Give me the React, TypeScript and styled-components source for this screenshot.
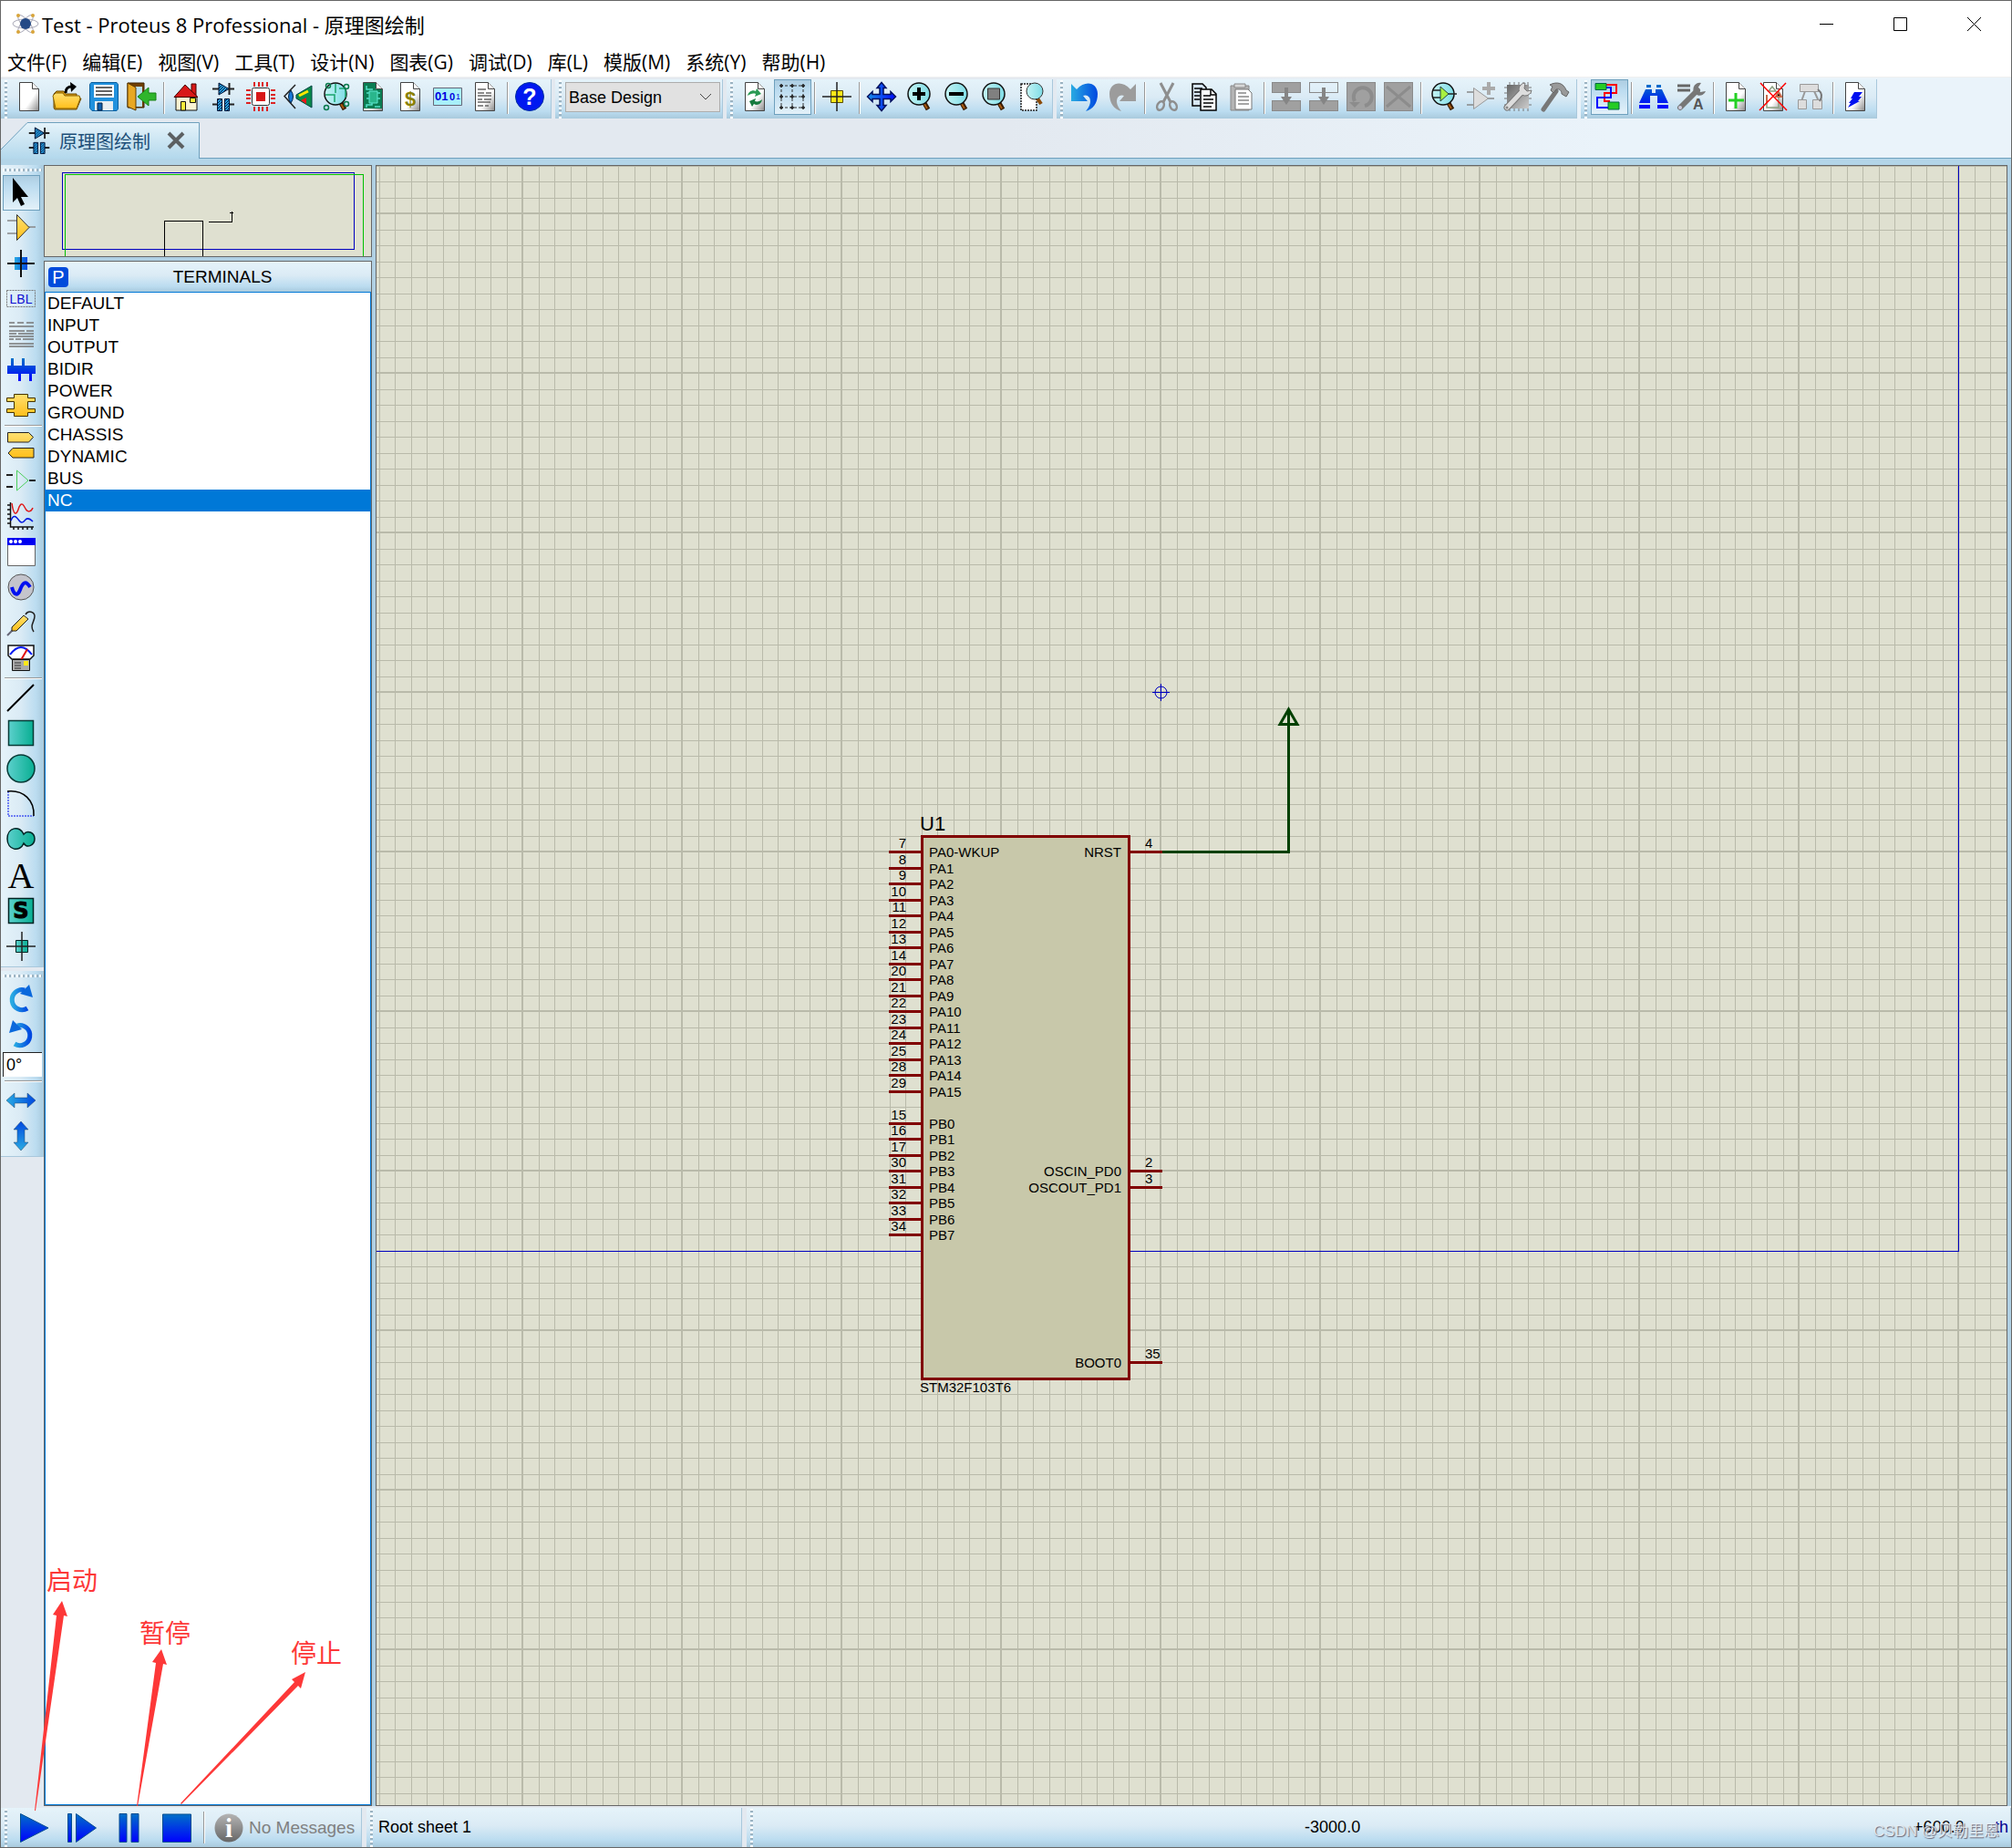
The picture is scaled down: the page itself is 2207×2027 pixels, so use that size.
import React, { ReactNode, useState } from "react";
import styled, { createGlobalStyle, css } from "styled-components";

const ui = `"Liberation Sans", "Noto Sans CJK SC", sans-serif`;
const system = `"Open Sans", "Noto Sans CJK SC", sans-serif`;
const barDown = "linear-gradient(180deg, #e5f3fa 0%, #dbebf5 45%, #bbdcf0 82%, #a9cadd 100%)";
const barRight = "linear-gradient(90deg, #e5f3fa 0%, #dbebf5 45%, #bbdcf0 82%, #a9cadd 100%)";

const GlobalStyle = createGlobalStyle`
  *, *::before, *::after { box-sizing: border-box; }
  html, body, #root { height: 100%; margin: 0; }
  body { overflow: hidden; background: #e3e9f0; font-family: ${ui}; font-size: 19px; color: #000; }
  button, input, select { font: inherit; color: inherit; margin: 0; padding: 0; border: 0; border-radius: 0; background: none; }
`;

const Window = styled.div`
  position: relative;
  display: flex;
  flex-direction: column;
  height: 100%;
  border: 1px solid #666;
  background: linear-gradient(90deg, #e3e9f0 0%, #e3e9f0 50%, #eaf3fa 80%);
`;

const TitleBar = styled.header`
  display: flex;
  align-items: center;
  height: 50px;
  padding-left: 11px;
  background: #fff;
  font: 22px ${system};
`;

const Title = styled.h1`
  flex: 1;
  margin: 0 0 0 2px;
  font: inherit;
`;

const WindowButton = styled.button`
  display: grid;
  place-items: center;
  width: 81px;
  height: 50px;
`;

const MenuBar = styled.nav`
  display: flex;
  gap: 17px;
  height: 33px;
  padding-left: 7px;
  background: #fff;
  font: 21px/34px ${system};
`;

const MenuItem = styled.button`
  white-space: nowrap;
`;

const ToolStrip = styled.div`
  display: flex;
  gap: 4px;
  height: 46px;
  padding-top: 2px;
  border-top: 1px solid #f0f0f0;
`;

const gripDown = css`
  width: 3px;
  background: repeating-linear-gradient(180deg, #fff 0 2px, #9cb3c2 2px 4px, transparent 4px 5px);
`;

const Toolbar = styled.div`
  display: flex;
  height: 43px;
  padding-right: 2px;
  background: ${barDown};
  border-right: 1px solid #a9c8dc;
  &::before {
    content: "";
    ${gripDown}
    margin: 1px 4px 0;
  }
`;

const ToolButton = styled.button<{ $on?: boolean }>`
  display: grid;
  place-items: center;
  flex: none;
  width: 41px;
  height: 39px;
  padding: 0 1px 1px 0;
  border: 1px solid ${(p) => (p.$on ? "#6ea0bd" : "transparent")};
  background: ${(p) => (p.$on ? "linear-gradient(180deg, #adcde1, #bcdcf0 30%, #e3f1f9)" : "none")};
  svg {
    overflow: visible;
  }
`;

const Divider = styled.span`
  width: 2px;
  height: 35px;
  margin: 3px;
  background: linear-gradient(90deg, #999 50%, #fff 50%);
`;

const SelectBox = styled.label`
  position: relative;
  width: 170px;
  height: 33px;
  margin-top: 3px;
  svg {
    position: absolute;
    right: 9px;
    top: 9px;
    pointer-events: none;
  }
`;

const Select = styled.select`
  appearance: none;
  width: 100%;
  height: 100%;
  padding-left: 3px;
  border: 1px solid #adadad;
  background: #e1e1e1;
  font-size: 18px;
`;

const TabStrip = styled.div`
  display: flex;
  height: 51px;
  padding-top: 4px;
  border-bottom: 7px solid #b3d5e8;
  background: linear-gradient(#6ea0bd, #6ea0bd) bottom / 100% 1px no-repeat;
`;

const Tab = styled.div`
  position: relative;
  display: flex;
  align-items: center;
  width: 218px;
  height: 40px;
  padding-left: 27px;
  font-size: 20px;
  color: #1d4f78;
`;

const TabShape = styled.svg`
  position: absolute;
  inset: 0;
`;

const TabLabel = styled.span`
  position: relative;
  width: 100px;
  margin-left: 5px;
  white-space: nowrap;
`;

const TabIcon = styled.span`
  position: relative;
  display: grid;
  width: 32px;
`;

const TabClose = styled.button`
  position: relative;
  display: grid;
  margin-left: 18px;
`;

const Workspace = styled.main`
  display: grid;
  grid-template-columns: 47px 360px minmax(0, 1fr);
  flex: 1;
  min-height: 0;
`;

const SideTools = styled.div`
  display: flex;
  flex-direction: column;
  gap: 4px;
`;

const SideBar = styled.div`
  display: flex;
  flex-direction: column;
  padding: 0 2px 2px;
  background: ${barRight};
  border-bottom: 1px solid #a9c8dc;
  &::before {
    content: "";
    height: 3px;
    margin: 4px 0;
    background: repeating-linear-gradient(90deg, #fff 0 2px, #9cb3c2 2px 4px, transparent 4px 5px);
  }
`;

const SideDivider = styled.span`
  height: 2px;
  margin: 1px 0 1px 2px;
  background: linear-gradient(180deg, #999 50%, #fff 50%);
`;

const Angle = styled.input`
  width: 43px;
  height: 27px;
  margin-bottom: 3px;
  padding-left: 3px;
  border-top: 1px solid #222;
  border-left: 1px solid #222;
  background: #fff;
  font-size: 18px;
`;

const Browser = styled.section`
  display: flex;
  flex-direction: column;
  gap: 4px;
  min-height: 0;
  background: #b0d0e3;
`;

const Overview = styled.div`
  height: 101px;
  border: 1px solid #666;
  background: #dfe0d0;
`;

const Terminals = styled.div`
  display: flex;
  flex-direction: column;
  flex: 1;
  border: 1px solid #666;
`;

const TerminalsHead = styled.div`
  display: flex;
  align-items: center;
  height: 33px;
  padding: 0 14px 0 4px;
  background: ${barDown};
`;

const PickButton = styled.button`
  width: 22px;
  height: 22px;
  border-radius: 4px;
  background: #004bdb;
  color: #fff;
  font-size: 20px;
  line-height: 22px;
`;

const TerminalsTitle = styled.h2`
  flex: 1;
  margin: 0;
  padding-left: 20px;
  text-align: center;
  font: inherit;
`;

const TerminalList = styled.ul`
  flex: 1;
  margin: 0;
  padding: 0;
  list-style: none;
  border: 1px solid #0078d7;
  background: #fff;
`;

const Terminal = styled.button<{ $on: boolean }>`
  display: block;
  width: 100%;
  height: 24px;
  padding-left: 2px;
  text-align: left;
  line-height: 24px;
  background: ${(p) => (p.$on ? "#0078d7" : "transparent")};
  color: ${(p) => (p.$on ? "#fff" : "#000")};
`;

const Sheet = styled.section`
  min-height: 0;
  padding: 0 4px;
  background: #b0d0e3;
`;

const SheetFrame = styled.div`
  height: 100%;
  border: 1px solid #666;
  background: #dfe0d0;
  svg {
    display: block;
  }
`;

const StatusBar = styled.footer`
  display: flex;
  gap: 5px;
  height: 45px;
  padding-top: 2px;
  font-size: 18px;
`;

const StatusPart = styled(Toolbar)<{ $width?: number }>`
  flex: ${(p) => (p.$width ? `0 0 ${p.$width}px` : "1")};
  align-items: center;
  &::before {
    align-self: stretch;
  }
`;

const PlayButton = styled.button`
  display: grid;
  place-items: center;
  width: 52px;
  height: 39px;
`;

const Message = styled.span`
  display: flex;
  align-items: center;
  gap: 6px;
  padding-left: 7px;
  font-size: 19px;
  color: #808080;
  white-space: nowrap;
`;

const SheetName = styled.span`
  padding-left: 2px;
`;

const Coordinates = styled.div`
  display: grid;
  grid-template-columns: 602fr 669fr 89fr 15fr;
  flex: 1;
  white-space: nowrap;
`;

const Unit = styled.span`
  color: #000090;
`;

const Watermark = styled.span`
  position: absolute;
  right: 13px;
  bottom: 4px;
  font: 17px/26px ${ui};
  color: rgba(235, 240, 244, 0.85);
  text-shadow: 1px 1px 1px #667;
`;

const Notes = styled.svg`
  position: absolute;
  left: -1px;
  bottom: -1px;
  pointer-events: none;
`;

const Shades = () => (
  <svg width="0" height="0" style={{ position: "absolute" }} aria-hidden="true">
    <defs>
      <linearGradient id="paper" x1="0" y1="0" x2="1" y2="1">
        <stop offset=".6" stopColor="#fff" />
        <stop offset="1" stopColor="#888" />
      </linearGradient>
      <linearGradient id="gold" x1="0" y1="0" x2="0" y2="1">
        <stop offset="0" stopColor="#ffe070" />
        <stop offset="1" stopColor="#ffbf1a" />
      </linearGradient>
      <linearGradient id="blue" x1="0" y1="0" x2="0" y2="1">
        <stop offset="0" stopColor="#0070c8" />
        <stop offset="1" stopColor="#0000ff" />
      </linearGradient>
      <linearGradient id="sky" x1="0" y1="0" x2="1" y2="0">
        <stop offset="0" stopColor="#29abe2" />
        <stop offset="1" stopColor="#0048e0" />
      </linearGradient>
      <linearGradient id="pan" x1="0" y1="0" x2="1" y2="0">
        <stop offset="0" stopColor="#1890e8" />
        <stop offset="1" stopColor="#0008ff" />
      </linearGradient>
      <linearGradient id="skyUp" x1="0" y1="1" x2="0" y2="0">
        <stop offset="0" stopColor="#29abe2" />
        <stop offset="1" stopColor="#0048e0" />
      </linearGradient>
      <linearGradient id="teal" x1="0" y1="0" x2="1" y2="0">
        <stop offset="0" stopColor="#5cd0cc" />
        <stop offset="1" stopColor="#08ae92" />
      </linearGradient>
      <linearGradient id="steel" x1="0" y1="0" x2="1" y2="1">
        <stop offset="0" stopColor="#666" />
        <stop offset="1" stopColor="#ccc" />
      </linearGradient>
      <linearGradient id="badge" x1="0" y1="0" x2="0" y2="1">
        <stop offset="0" stopColor="#b4b4b4" />
        <stop offset="1" stopColor="#666" />
      </linearGradient>
      <linearGradient id="lens" x1="0" y1="0" x2="1" y2="0">
        <stop offset="0" stopColor="#c4f4f4" />
        <stop offset="1" stopColor="#7fdce6" />
      </linearGradient>
      <linearGradient id="tab" x1="0" y1="0" x2="0" y2="1">
        <stop offset="0" stopColor="#e5f3fa" />
        <stop offset="1" stopColor="#b3d8ec" />
      </linearGradient>
      <pattern id="hatch" width="3" height="3" patternUnits="userSpaceOnUse">
        <rect width="3" height="3" fill="#29a0e8" />
        <path d="M0 3L3 0" stroke="#024" />
      </pattern>
    </defs>
  </svg>
);

const page = (
  <>
    <path d="M5.5 .5h14l7 7v24h-21z" fill="url(#paper)" stroke="#444" />
    <path d="M19.5 .5v7h7" fill="#fff" stroke="#444" />
  </>
);
const lens = (
  <>
    <path d="M22 23l4 7" stroke="#3a1c00" strokeWidth="5" />
    <path d="M22 24l3 5" stroke="#a85a10" strokeWidth="2" />
    <circle cx="16" cy="13" r="12" fill="url(#lens)" stroke="#111" strokeWidth="1.5" />
  </>
);
const greyBlock = (y: number, h: number, fill = "#a0a0a0") => (
  <rect x=".5" y={y + 0.5} width="31" height={h - 1} fill={fill} stroke="#8a8a8a" />
);

const art: Record<string, ReactNode> = {
  new: page,
  open: (
    <>
      <path d="M2 28V13l3-3h8l2 3h12v5h5l-5 12H3z" fill="#d99a10" stroke="#6b4a00" />
      <path d="M1 15l3-3h8l2 3h16l1 3-4 11H4z" fill="url(#gold)" stroke="#8a6200" />
      <path d="M15 12c0-5 2-7 7-7" fill="none" stroke="#000" strokeWidth="3" />
      <path d="M20 0l7 5-6 6z" />
    </>
  ),
  save: (
    <>
      <path d="M2 .5h28l1.5 2v27l-1.5 2H3l-2.5-3v-26z" fill="#2191dd" stroke="#0c5f9e" />
      <path d="M5 3h22v14H5z" fill="#fff" />
      <path d="M7 6h18M7 10h18M7 14h18" stroke="#333" strokeWidth="1.5" />
      <path d="M6 21h20v10H6z" fill="#e8eef2" />
      <path d="M9 23h5v8H9z" fill="#0e5fae" stroke="#024" />
    </>
  ),
  exit: (
    <>
      <path d="M1 1h18v27H1z" fill="#704000" stroke="#402400" />
      <path d="M8 5h9v22H8z" fill="#b9dff0" />
      <path d="M1 1l9 5v25l-9-4z" fill="#e8a823" stroke="#5b3900" />
      <path d="M32 12h-8V6L12 16l12 10v-6h8z" fill="#2fb52c" stroke="#178014" />
    </>
  ),
  home: (
    <>
      <path d="M22 2h5v14h-5z" fill="#d81818" stroke="#400" />
      <path d="M5 16h23v15H5z" fill="#fbf4d2" stroke="#111" />
      <path d="M15 3L3 16.5h26z" fill="#d81818" stroke="#400" />
      <path d="M10.5 21.5h5V31h-5zM20.5 17.5h6v5h-6z" fill="#ffef3a" stroke="#111" />
    </>
  ),
  schematic: (
    <>
      <path d="M4 7.5h24M4 24.5h24" stroke="#222" strokeWidth="2" />
      <path d="M11 1v13l11-6.500z" fill="url(#hatch)" stroke="#013" />
      <path d="M22.5 1v13" stroke="#222" strokeWidth="2" />
      <path d="M9.5 18.5h5v13h-5zM17.5 18.5h5v13h-5z" fill="url(#hatch)" stroke="#013" />
      <path d="M15 24.5h2" stroke="#d3e7f3" strokeWidth="3" />
    </>
  ),
  pcb: (
    <>
      <path d="M9 0v32M14 0v32M18 0v32M23 0v32M0 9h32M0 14h32M0 18h32M0 23h32" stroke="#d22" strokeWidth="2" />
      <rect x="5" y="5" width="22" height="22" fill="#d8ebf6" />
      <rect x="6.5" y="6.5" width="19" height="19" rx="2" fill="#fff" stroke="#333" />
      <path d="M11 11h10v10H11z" fill="#d81818" />
    </>
  ),
  viewer: (
    <>
      <path d="M13 3L1 15.5 13 29" fill="none" stroke="#222" strokeWidth="1.5" />
      <path d="M8 9q5 7 0 14-5-7 0-14z" fill="#1878d8" stroke="#024" />
      <path d="M31 4v24L14 18v-4z" fill="#0a8a4a" stroke="#044" />
      <path d="M17 15l10-5" stroke="#ffe800" strokeWidth="3" />
      <path d="M19 20l6-3v7z" fill="#f01818" />
    </>
  ),
  inspect: (
    <>
      {lens}
      <path d="M16 2v10M5 14h10v8M20 7h7v10" fill="none" stroke="#1aa46c" strokeWidth="1.5" />
      <g fill="none" stroke="#0a7a4c" strokeWidth="1.5">
        <circle cx="6" cy="28" r="2.5" />
        <circle cx="28" cy="5" r="2.5" />
        <circle cx="28" cy="24" r="2.5" />
        <circle cx="8" cy="4" r="2.5" />
      </g>
    </>
  ),
  pcbPage: (
    <>
      {page}
      <path d="M6 1h13v7h7v21H6z" fill="#0b7c52" />
      <path d="M12 10h9v13h-9z" fill="#2ab68c" stroke="#60e8d0" />
      <path d="M9 4v4h7M9 12h3M9 18h3M9 28v-3h6v-2M24 12h-3M24 18h-3M24 27h-6" fill="none" stroke="#54e0c8" strokeWidth="1.5" />
    </>
  ),
  cost: (
    <>
      {page}
      <text x="16" y="26" textAnchor="middle" fontSize="22" fontWeight="700" fill="#8a8000">$</text>
    </>
  ),
  binary: (
    <>
      <path d="M.5 6.5h31v19H.5z" fill="#a8f0fa" stroke="#667" />
      <text x="2" y="20" fontSize="13" fontWeight="700" fill="#0000e0">01</text>
      <text x="18" y="20" fontSize="11" fontWeight="700" fill="#0000e0">0</text>
      <text x="25" y="19" fontSize="9" fill="#0000e0">1</text>
    </>
  ),
  report: (
    <>
      {page}
      <path d="M8 8h9M8 12h7m2 0h6M8 15h15M8 19h5m2 0h8M8 22h14M8 26h6m2 0h4" stroke="#666" strokeWidth="1.5" />
    </>
  ),
  help: (
    <>
      <circle cx="16" cy="16" r="15.5" fill="#0018f0" stroke="#0030a0" />
      <text x="16" y="25" textAnchor="middle" fontSize="25" fontWeight="700" fill="#fff">?</text>
    </>
  ),
  refresh: (
    <>
      {page}
      <path d="M8 15c1-5 6-7 9-5l1-3 5 6-7 3 1-3c-3-1-6 0-9 2z" fill="#2a9a54" />
      <path d="M24 19c-1 6-6 7-9 5l-2 3-3-6 7-3-1 3c3 1 6 0 8-2z" fill="#167a3e" />
    </>
  ),
  grid: (
    <>
      <path d="M3 4h26M3 16h26M3 28h26M4 3v26M16 3v26M28 3v26" stroke="#333" strokeDasharray="3 2" />
      <path d="M2 4h4M14 4h4M26 4h4M2 16h4M14 16h4M26 16h4M2 28h4M14 28h4M26 28h4M4 2v4M16 2v4M28 2v4M4 14v4M16 14v4M28 14v4M4 26v4M16 26v4M28 26v4" stroke="#222" strokeWidth="1.5" />
    </>
  ),
  origin: (
    <>
      <path d="M9.5 9.5h13v13h-13z" fill="#ffe818" stroke="#554a00" />
      <path d="M16 0v32M0 16h32" stroke="#222" strokeWidth="1.5" />
    </>
  ),
  pan: (
    <path d="M16 .5l5 6h-3v7h8v-3l5.5 5.5-5.5 5.5v-3h-8v7h3l-5 6-5-6h3v-7H6v3L.5 16 6 10.5v3h8v-7h-3z" fill="url(#pan)" stroke="#001060" strokeWidth="1.5" />
  ),
  zoomIn: (
    <>
      {lens}
      <path d="M9 13h14M16 6v14" stroke="#000" strokeWidth="4" />
    </>
  ),
  zoomOut: (
    <>
      {lens}
      <path d="M8 13h16" stroke="#000" strokeWidth="4" />
    </>
  ),
  zoomAll: (
    <>
      {lens}
      <path d="M9.5 7h13v12h-13z" fill="#808080" stroke="#333" />
    </>
  ),
  zoomArea: (
    <>
      <path d="M5 2h17v29H5z" fill="#fff" stroke="#222" strokeWidth="1.5" strokeDasharray="2 1" />
      <path d="M23 18l4 6" stroke="#8a4a08" strokeWidth="4" />
      <circle cx="20" cy="10" r="9" fill="url(#lens)" stroke="#333" />
    </>
  ),
  undo: <path d="M1 2l6 6C17-3 30 1 30 13c0 10-5 17-13 19 5-6 6-11 4-15-2-3-5-3-7-2l5 6H1z" fill="url(#sky)" />,
  redo: <path d="M31 2l-6 6C15-3 2 1 2 13c0 10 5 17 13 19-5-6-6-11-4-15 2-3 5-3 7-2l-5 6h18z" fill="#9c9c9c" />,
  cut: (
    <g fill="none" stroke="#8e8e8e">
      <path d="M9 1l11 21M23 1L12 22" strokeWidth="3" />
      <ellipse cx="9" cy="26" rx="3.5" ry="5" strokeWidth="2.5" transform="rotate(25 9 26)" />
      <ellipse cx="23" cy="26" rx="3.5" ry="5" strokeWidth="2.5" transform="rotate(-25 23 26)" />
    </g>
  ),
  copy: (
    <>
      <path d="M3 2h11l4 4v20H3z" fill="#d8e8f4" stroke="#000" strokeWidth="1.5" />
      <path d="M5 7h9M5 11h9M5 15h6M5 19h6" stroke="#000" strokeWidth="1.5" />
      <path d="M12 8h12l5 5v18H12z" fill="#fff" stroke="#000" strokeWidth="1.5" />
      <path d="M23 8v6h6M15 15h8M15 19h11M15 23h11M15 27h9" fill="none" stroke="#000" strokeWidth="1.5" />
    </>
  ),
  paste: (
    <>
      <path d="M4 4h20v27H4z" fill="#b4b4b4" stroke="#888" />
      <path d="M8 2h12v4H8z" fill="#d8d8d8" stroke="#888" />
      <path d="M9 8h14l4 4v18H9z" fill="#fff" stroke="#777" />
      <path d="M12 12h9M12 16h12M12 20h12M12 24h12" stroke="#888" strokeWidth="1.5" />
    </>
  ),
  blockCopy: (
    <>
      {greyBlock(0, 12)}
      {greyBlock(20, 12)}
      <path d="M14 6h4v10h4l-6 9-6-9h4z" fill="#858585" />
    </>
  ),
  blockMove: (
    <>
      {greyBlock(0, 12, "none")}
      {greyBlock(20, 12)}
      <path d="M14 6h4v10h4l-6 9-6-9h4z" fill="#858585" />
    </>
  ),
  blockRotate: (
    <>
      {greyBlock(0, 32)}
      <path d="M9 21a10 10 0 1 1 11 5" fill="none" stroke="#8c8c8c" strokeWidth="4" />
      <path d="M3 22h12l-6 6z" fill="#8c8c8c" />
    </>
  ),
  blockDelete: (
    <>
      {greyBlock(0, 32)}
      <path d="M3 5l26 22M29 5L3 27" stroke="#8c8c8c" strokeWidth="3" />
    </>
  ),
  pick: (
    <>
      {lens}
      <path d="M5 9h8M5 17h8M21 13h10" stroke="#222" strokeWidth="1.5" />
      <path d="M13 5v16l9-8z" fill="#a8f040" stroke="#244" />
    </>
  ),
  make: (
    <>
      <path d="M1 11h8M1 25h8M23 18h8" stroke="#888" strokeWidth="1.5" />
      <path d="M8.5 6.5v23l16-11.5z" fill="#ddd" stroke="#999" />
      <path d="M25 0v14M18 7h14" stroke="#aaa" strokeWidth="4" />
    </>
  ),
  package: (
    <>
      <path d="M7 0v32M12 0v32M17 0v32M22 0v32M27 0v32M1 6h30M1 12h30M1 18h30M1 25h30" stroke="#777" />
      <path d="M4 3h24v26H4z" fill="url(#steel)" />
      <path d="M4 28L21 10" stroke="#777" strokeWidth="7" strokeLinecap="round" />
      <path d="M24 1a7 7 0 1 0 7 8l-5 1-3-3z" fill="#ddd" stroke="#777" />
      <path d="M4 28L21 10" stroke="#ddd" strokeWidth="5" strokeLinecap="round" />
      <circle cx="4" cy="28" r="1.5" fill="#888" />
    </>
  ),
  decompose: (
    <>
      <path d="M3 30L17 10" stroke="#777" strokeWidth="5" strokeLinecap="round" />
      <path d="M10 3c8-4 15-2 18 6l3 2-3 5-5-3c0-4-3-6-6-5l-3 4-3-3 2-4z" fill="#999" stroke="#666" />
    </>
  ),
  router: (
    <>
      <path d="M13 3h11v9H11v9h6" fill="none" stroke="#f00" strokeWidth="2" />
      <path d="M13 6h5v11H3v11h12" fill="none" stroke="#00f" strokeWidth="2" />
      <path d="M1 1.5h12v7H1zM15 22h12v8H15z" fill="#25cc25" stroke="#064" />
    </>
  ),
  search: (
    <>
      <path d="M8 3h5v3H8zM19 3h5v3h-5zM7 8h7v4h4V8h7l7 15H20v-8h-8v8H0zM0 25h12v4H0zM20 25h12v4H20z" fill="url(#blue)" />
    </>
  ),
  assign: (
    <>
      <path d="M1 4h14M1 9h14" stroke="#666" strokeWidth="3" />
      <path d="M4 28L23 9" stroke="#777" strokeWidth="6" strokeLinecap="round" />
      <path d="M27 1a7 7 0 1 0 5 9l-6 1-3-4z" fill="#777" />
      <circle cx="4" cy="28" r="2" fill="#ccd" />
      <text x="18" y="30" fontSize="16" fontWeight="700" fill="#555">A</text>
    </>
  ),
  addSheet: (
    <>
      {page}
      <path d="M16 12v17M8 20h17" stroke="#24d024" strokeWidth="3" />
    </>
  ),
  removeSheet: (
    <>
      {page}
      <path d="M9 14v14h13V14M15 5l-4 5h8z" fill="none" stroke="#8aa080" strokeWidth="1.5" />
      <path d="M9 14v9M22 11l3 5h-6z" stroke="#c86848" strokeWidth="2" />
      <path d="M2 1l29 30M30 1L1 31" stroke="#f00" strokeWidth="1.5" />
    </>
  ),
  parent: (
    <>
      <path d="M10 10L6 21M20 10l5 11" stroke="#999" strokeWidth="2" />
      <path d="M4.5 2.5h20v8h-20zM2.5 19.5h9v10h-9zM18.5 19.5h10v10h-10z" fill="#ddd" stroke="#999" />
      <path d="M26 21q5-7-2-13" fill="none" stroke="#777" strokeWidth="2" />
    </>
  ),
  electrical: (
    <>
      {page}
      <path d="M15 11h9l-4 5h3l-4 5h2L8 28l3-5h-2l4-5h-2z" fill="#0010f0" />
    </>
  ),
  arrow: <path d="M7 0v27l5-5 4 9 4-2-4-8h8z" />,
  component: (
    <>
      <path d="M1 8h10M1 22h10M24 15h8" stroke="#888" strokeWidth="1.5" />
      <path d="M11.5 1.5v28l13.5-14z" fill="url(#gold)" stroke="#333" />
    </>
  ),
  junction: (
    <>
      <path d="M9 9h14v14H9z" fill="url(#sky)" />
      <path d="M16 1v30M1 16h30" stroke="#111" strokeWidth="2" />
    </>
  ),
  label: (
    <>
      <path d="M.5 6.5h31v18H.5z" fill="none" stroke="#777" strokeDasharray="2 1" />
      <text x="16" y="21" textAnchor="middle" fontSize="14" fill="#1010d0">LBL</text>
    </>
  ),
  script: (
    <path d="M3 3h6m3 0h7m3 0h8M3 7h27M3 12h17m2 0h8M3 15h8m2 0h17M3 18h27M3 21h5m2 0h6m2 0h12M3 26h27M3 29h27" stroke="#777" strokeWidth="1.5" />
  ),
  bus: <path d="M5 3h3v8h9V3h3v8h12v9h-4v8h-3v-8h-9v8h-3v-8H1v-9h4z" fill="url(#blue)" />,
  subcircuit: <path d="M8.5 3.5h15v4h8v4h-8v8h8v4h-8v4h-15v-4h-8v-4h8v-8h-8v-4h8z" fill="url(#gold)" stroke="#443300" />,
  terminal: (
    <path d="M1.5 2.5h23l5 5-5 5.5h-23zM30 19.5H7l-5 5.5 5 5h23z" fill="url(#gold)" stroke="#222" />
  ),
  devicePin: (
    <>
      <path d="M0 10h7M0 23h7M25 16h7" stroke="#222" strokeWidth="2" />
      <path d="M11.5 5v22L24 16z" fill="none" stroke="#4cd05c" />
    </>
  ),
  graph: (
    <>
      <path d="M4.5 1v27H30M1 4h3M1 9h3M1 14h3M1 19h3M1 24h3M8 28v3M13 28v3M18 28v3M23 28v3M28 28v3" fill="none" stroke="#111" strokeWidth="1.5" />
      <path d="M6 2c2 14 5 14 8 4 3-6 5-2 7 2s6 4 8-1" fill="none" stroke="#e01818" strokeWidth="1.5" />
      <path d="M5 21c3-8 6-4 9 0s5 1 7-1 5-1 8 2" fill="none" stroke="#0018e0" strokeWidth="1.5" />
    </>
  ),
  popup: (
    <>
      <path d="M1.5 1.5h30v30h-30z" fill="#fff" stroke="#666" />
      <path d="M1 1h31v8H1z" fill="#0000f0" />
      <g fill="#fff">
        <circle cx="5" cy="5" r="2" />
        <circle cx="10" cy="5" r="2" />
        <circle cx="15" cy="5" r="2" />
      </g>
    </>
  ),
  generator: (
    <>
      <circle cx="16" cy="16" r="14" fill="#c4c4cc" stroke="#555" />
      <path d="M6 16c2 8 6 11 9 3s6-11 11-3" fill="none" stroke="#0010f0" strokeWidth="4" />
    </>
  ),
  probe: (
    <>
      <path d="M1 30l6-6" stroke="#667" strokeWidth="2" />
      <path d="M6 21L19 8l5 4L11 25H6z" fill="url(#gold)" stroke="#222" />
      <path d="M21 7c3-5 10-3 10 2 0 6-6 10-1 17" fill="none" stroke="#222" strokeWidth="1.5" />
    </>
  ),
  instrument: (
    <>
      <path d="M2 2h28v11l-4 4H6l-4-4z" fill="#fff" stroke="#111" strokeWidth="1.5" />
      <path d="M4 12q12-16 24 0" fill="none" stroke="#0018f0" strokeWidth="2" />
      <path d="M16 18l7-12" stroke="#e01010" strokeWidth="2" />
      <path d="M6.5 17.5h19v12h-19z" fill="#aaa" stroke="#111" />
      <path d="M9 21h7M9 24h7M9 27h7" stroke="#333" />
      <path d="M19 19h5v5h-5z" fill="#ffe818" />
    </>
  ),
  line: <path d="M1 31L30 2" stroke="#000" strokeWidth="2" />,
  box: <path d="M2.5 2.5h27v27h-27z" fill="url(#teal)" stroke="#063a36" strokeWidth="1.5" />,
  circle: <circle cx="16" cy="16" r="15" fill="url(#teal)" stroke="#063a36" strokeWidth="1.5" />,
  arc: (
    <>
      <path d="M2 2v27h28" fill="none" stroke="#0010f0" strokeDasharray="2 1" />
      <path d="M1 2c18-2 30 10 29 27" fill="none" stroke="#000" strokeWidth="1.5" />
    </>
  ),
  shape: (
    <path d="M19 10c4-5 12-2 12 5s-8 11-12 5c-4 10-18 8-18-5C1 2 15 0 19 10z" fill="url(#teal)" stroke="#022" strokeWidth="1.5" />
  ),
  text: <text x="16" y="30" textAnchor="middle" fontFamily="Liberation Serif" fontSize="40">A</text>,
  symbol: (
    <>
      <path d="M2.5 2.5h27v27h-27z" fill="url(#teal)" stroke="#022" strokeWidth="1.5" />
      <text x="16" y="24" textAnchor="middle" fontFamily="DejaVu Sans" fontSize="24" fontWeight="700" stroke="#000">S</text>
    </>
  ),
  marker: (
    <>
      <path d="M10.5 9.5h13v13h-13z" fill="url(#teal)" stroke="#022" />
      <path d="M17 0v32M0 16h32" stroke="#222" strokeWidth="1.5" />
    </>
  ),
  clockwise: (
    <>
      <path d="M23 27A11 11 0 1 1 20 7" fill="none" stroke="url(#sky)" strokeWidth="5" />
      <path d="M25 1l4 14-14-4z" fill="#0a68dc" />
    </>
  ),
  anticlockwise: (
    <>
      <path d="M9 27A11 11 0 1 0 12 7" fill="none" stroke="url(#sky)" strokeWidth="5" />
      <path d="M7 1L3 15l14-4z" fill="#0a68dc" />
    </>
  ),
  flipH: <path d="M0 16l9-8v5h14V8l9 8-9 8v-5H9v5z" fill="url(#sky)" stroke="#246" strokeWidth=".5" />,
  flipV: <path d="M16 0l8 9h-4v14h4l-8 9-8-9h4V9H8z" fill="url(#skyUp)" stroke="#246" strokeWidth=".5" />,
  play: <path d="M.5 .5v31L31 16z" fill="url(#blue)" stroke="#024c90" />,
  step: <path d="M.5 .5h4v31h-4zM9.5 .5v31L31.5 16z" fill="url(#blue)" stroke="#024c90" />,
  pause: <path d="M5 .5h8v31H5zM18 .5h8v31h-8z" fill="url(#blue)" stroke="#024c90" />,
  stop: <path d="M.5 1h31v30.5H.5z" fill="url(#blue)" stroke="#024c90" />,
  info: (
    <>
      <circle cx="16" cy="16" r="15.5" fill="url(#badge)" />
      <text x="16" y="26" textAnchor="middle" fontFamily="Liberation Serif" fontSize="29" fontWeight="700" fill="#fff">i</text>
    </>
  ),
};

const Icon = ({ name, size = 32 }: { name: string; size?: number }) => (
  <svg width={size} height={size} viewBox="0 0 32 32" aria-hidden="true">
    {art[name]}
  </svg>
);

const Tools = ({ names, on, upright }: { names: string[]; on?: string; upright?: boolean }) => (
  <>
    {names.map((n, i) =>
      n === "|" ? (
        upright ? <SideDivider key={i} /> : <Divider key={i} />
      ) : (
        <ToolButton key={i} $on={n === on} aria-label={n} type="button">
          <Icon name={n} />
        </ToolButton>
      ),
    )}
  </>
);

const menus = ["文件(F)", "编辑(E)", "视图(V)", "工具(T)", "设计(N)", "图表(G)", "调试(D)", "库(L)", "模版(M)", "系统(Y)", "帮助(H)"];
const terminals = ["DEFAULT", "INPUT", "OUTPUT", "BIDIR", "POWER", "GROUND", "CHASSIS", "DYNAMIC", "BUS", "NC"];

const fileTools = "new open save exit | home schematic pcb viewer inspect pcbPage cost binary report | help".split(" ");
const viewTools = "refresh grid | origin | pan zoomIn zoomOut zoomAll zoomArea".split(" ");
const editTools =
  "undo redo | cut copy paste | blockCopy blockMove blockRotate blockDelete | pick make package decompose".split(" ");
const designTools = "router | search assign | addSheet removeSheet parent | electrical".split(" ");
const modeTools =
  "arrow component junction label script bus subcircuit | terminal devicePin graph popup generator probe instrument | line box circle arc shape text symbol marker".split(
    " ",
  );

type Pin = { slot: number; num: string; name: string };
const paNumbers = [7, 8, 9, 10, 11, 12, 13, 14, 20, 21, 22, 23, 24, 25, 28, 29];
const pbNumbers = [15, 16, 17, 30, 31, 32, 33, 34];
const leftPins: Pin[] = [
  ...paNumbers.map((n, i) => ({ slot: i, num: String(n), name: i === 0 ? "PA0-WKUP" : `PA${i}` })),
  ...pbNumbers.map((n, i) => ({ slot: i + 17, num: String(n), name: `PB${i}` })),
];
const rightPins: Pin[] = [
  { slot: 0, num: "4", name: "NRST" },
  { slot: 20, num: "2", name: "OSCIN_PD0" },
  { slot: 21, num: "3", name: "OSCOUT_PD1" },
  { slot: 32, num: "35", name: "BOOT0" },
];
const pinTop = (slot: number) => 751 + Math.round((slot * 35) / 2);
const minor = [19, 36, 54, 71, 89, 106, 124, 141, 159];

const Schematic = () => (
  <svg width="100%" height="100%" fontFamily="Liberation Sans" fontSize="15" role="img" aria-label="STM32F103T6">
    <defs>
      <pattern id="sheetGrid" x="159" y="51" width="175" height="175" patternUnits="userSpaceOnUse">
        <g fill="#b9baaa" shapeRendering="crispEdges">
          {minor.map((m) => (
            <React.Fragment key={m}>
              <rect x={m} y="0" width="1" height="175" />
              <rect x="0" y={m} width="175" height="1" />
            </React.Fragment>
          ))}
          <rect width="2" height="175" />
          <rect width="175" height="2" />
        </g>
      </pattern>
    </defs>
    <rect width="100%" height="100%" fill="url(#sheetGrid)" />
    <g shapeRendering="crispEdges" fill="#0000c0">
      <rect x="0" y="1190" width="1736" height="1" />
      <rect x="1735" y="0" width="1" height="1190" />
    </g>
    <rect x="598.5" y="735.5" width="227" height="595" fill="#c8c8aa" stroke="#800000" strokeWidth="3" />
    <g fill="#800000">
      {leftPins.map((p) => (
        <rect key={p.num} x="562" y={pinTop(p.slot)} width="35" height="3" />
      ))}
      {rightPins.map((p) => (
        <rect key={p.num} x="827" y={pinTop(p.slot)} width="35" height="3" />
      ))}
    </g>
    {leftPins.map((p) => (
      <React.Fragment key={p.num}>
        <text x="581" y={pinTop(p.slot) - 3} textAnchor="end">{p.num}</text>
        <text x="606" y={pinTop(p.slot) + 7}>{p.name}</text>
      </React.Fragment>
    ))}
    {rightPins.map((p) => (
      <React.Fragment key={p.num}>
        <text x="843" y={pinTop(p.slot) - 3}>{p.num}</text>
        <text x="817" y={pinTop(p.slot) + 7} textAnchor="end">{p.name}</text>
      </React.Fragment>
    ))}
    <text x="596" y="729" fontSize="22">U1</text>
    <text x="596" y="1345">STM32F103T6</text>
    <g fill="none" stroke="#004000" strokeWidth="3">
      <path d="M862 752.5H1000.5V597" />
      <path d="M1000.5 596L991 612.5H1010z" />
    </g>
    <g fill="none" stroke="#0000c0">
      <circle cx="860.5" cy="577.5" r="6.5" />
      <path d="M851 577.5h19M860.5 568v19" />
    </g>
  </svg>
);

const Annotations = () => (
  <Notes width="400" height="337" fill="#fd3838" fontFamily="Noto Sans CJK SC" fontSize="28" aria-label="notes">
    <text x="51" y="54">启动</text>
    <text x="153" y="112">暂停</text>
    <text x="319" y="134">停止</text>
    <path d="M38 296L62 82 58 81 68 66 74 83 70 82 39 296z" />
    <path d="M150 291L171 134 167 133 177 119 183 136 179 135 151 291z" />
    <path d="M198 288L323 155 320 152 335 144 330 162 327 159 199 289z" />
  </Notes>
);

export default function App() {
  const [terminal, setTerminal] = useState("NC");
  return (
    <>
      <GlobalStyle />
      <Window>
        <Shades />
        <TitleBar>
          <svg width="32" height="24" viewBox="0 0 32 24" aria-hidden="true">
            <g fill="none" stroke="#a9a9b8">
              <ellipse cx="16" cy="12" rx="14" ry="5" />
              <ellipse cx="16" cy="12" rx="12" ry="4" transform="rotate(50 16 12)" />
              <ellipse cx="16" cy="12" rx="12" ry="4" transform="rotate(-50 16 12)" />
            </g>
            <circle cx="16" cy="12" r="6" fill="#244a86" />
            <g fill="#d9a53a">
              <circle cx="8" cy="3" r="2" />
              <circle cx="24" cy="3" r="2" />
              <circle cx="8" cy="21" r="2" />
              <circle cx="24" cy="21" r="2" />
            </g>
          </svg>
          <Title>Test - Proteus 8 Professional - 原理图绘制</Title>
          <WindowButton aria-label="Minimize">
            <svg width="15" height="15"><path d="M0 7.5h15" stroke="#000" /></svg>
          </WindowButton>
          <WindowButton aria-label="Maximize">
            <svg width="15" height="15"><path d="M.5 .5h14v14H.5z" fill="none" stroke="#000" /></svg>
          </WindowButton>
          <WindowButton aria-label="Close">
            <svg width="15" height="15"><path d="M0 0l15 15M15 0L0 15" stroke="#000" /></svg>
          </WindowButton>
        </TitleBar>
        <MenuBar>
          {menus.map((m) => (
            <MenuItem key={m}>{m}</MenuItem>
          ))}
        </MenuBar>
        <ToolStrip>
          <Toolbar>
            <Tools names={fileTools} />
          </Toolbar>
          <Toolbar>
            <SelectBox>
              <Select aria-label="Design variant">
                <option>Base Design</option>
              </Select>
              <svg width="14" height="14"><path d="M1 4l6 6 6-6" fill="none" stroke="#444" /></svg>
            </SelectBox>
          </Toolbar>
          <Toolbar>
            <Tools names={viewTools} on="grid" />
          </Toolbar>
          <Toolbar>
            <Tools names={editTools} />
          </Toolbar>
          <Toolbar>
            <Tools names={designTools} on="router" />
          </Toolbar>
        </ToolStrip>
        <TabStrip>
          <Tab>
            <TabShape width="218" height="40" aria-hidden="true">
              <path d="M0 30L29 .5H217.5V40H0z" fill="url(#tab)" />
              <path d="M0 30L29 .5H217.5V40" fill="none" stroke="#6ea0bd" />
            </TabShape>
            <TabIcon>
              <Icon name="schematic" size={30} />
            </TabIcon>
            <TabLabel>原理图绘制</TabLabel>
            <TabClose aria-label="Close tab">
              <svg width="20" height="20"><path d="M2 2l16 16M18 2L2 18" stroke="#5c6062" strokeWidth="4" /></svg>
            </TabClose>
          </Tab>
        </TabStrip>
        <Workspace>
          <SideTools>
            <SideBar>
              <Tools upright names={modeTools} on="arrow" />
            </SideBar>
            <SideBar>
              <Tools upright names={["clockwise", "anticlockwise"]} />
              <Angle aria-label="Rotation angle" defaultValue="0°" />
              <Tools upright names={["|", "flipH", "flipV"]} />
            </SideBar>
          </SideTools>
          <Browser>
            <Overview>
              <svg width="358" height="99" aria-hidden="true">
                <g fill="none" shapeRendering="crispEdges">
                  <path d="M19.5 7.5h320v84h-320z" stroke="#0000c0" />
                  <path d="M22.5 99V9.5h327V99" stroke="#00c000" />
                  <path d="M131.5 99V60.5h42V99M180 61.5h25.5V50M203 51.5h4" stroke="#000" />
                </g>
              </svg>
            </Overview>
            <Terminals>
              <TerminalsHead>
                <PickButton aria-label="Pick devices">P</PickButton>
                <TerminalsTitle>TERMINALS</TerminalsTitle>
              </TerminalsHead>
              <TerminalList>
                {terminals.map((t) => (
                  <li key={t}>
                    <Terminal $on={t === terminal} onClick={() => setTerminal(t)}>
                      {t}
                    </Terminal>
                  </li>
                ))}
              </TerminalList>
            </Terminals>
          </Browser>
          <Sheet>
            <SheetFrame>
              <Schematic />
            </SheetFrame>
          </Sheet>
        </Workspace>
        <StatusBar>
          <StatusPart $width={396}>
            {["play", "step", "pause", "stop"].map((n) => (
              <PlayButton key={n} aria-label={n}>
                <Icon name={n} />
              </PlayButton>
            ))}
            <Divider />
            <Message>
              <Icon name="info" />
              No Messages
            </Message>
          </StatusPart>
          <StatusPart $width={412}>
            <SheetName>Root sheet 1</SheetName>
          </StatusPart>
          <StatusPart>
            <Coordinates>
              <span>&nbsp;</span>
              <span>-3000.0</span>
              <span>+600.0</span>
              <Unit>th</Unit>
            </Coordinates>
          </StatusPart>
        </StatusBar>
        <Watermark>CSDN @贝勒里恩</Watermark>
        <Annotations />
      </Window>
    </>
  );
}
